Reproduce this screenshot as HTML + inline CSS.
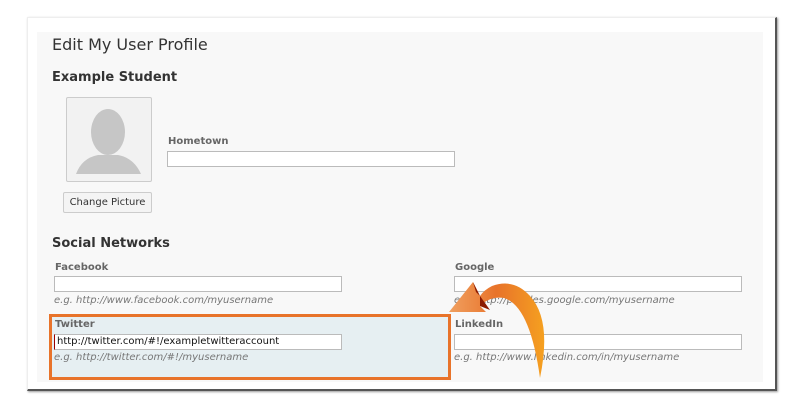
<!DOCTYPE html>
<html><head><style>
*{margin:0;padding:0;box-sizing:border-box}
body{width:800px;height:414px;background:#fff;position:relative;overflow:hidden;font-family:"DejaVu Sans","Liberation Sans",sans-serif}
.a{position:absolute}
.outer{left:27px;top:17px;width:750px;height:374px;background:#fff;border:1px solid #eee;border-right:2px solid #555;border-bottom:2px solid #555;box-shadow:1px 1px 2px #999}
.panel{left:37px;top:32px;width:726px;height:350px;background:#f8f8f8}
.lbl{font-size:10px;font-weight:bold;color:#666}
.inp{height:16px;background:#fff;border:1px solid #bbb}
.hint{font-size:10px;font-style:italic;color:#777}
</style></head><body>
<div class="a outer"></div>
<div class="a panel"></div>
<div class="a" style="left:52px;top:35px;font-size:16px;color:#333">Edit My User Profile</div>
<div class="a" style="left:52px;top:70px;font-size:13px;font-weight:bold;color:#333">Example Student</div>
<div class="a" style="left:66px;top:97px;width:86px;height:85px;background:#f2f2f2;border:1px solid #ccc;border-radius:2px"></div>
<svg class="a" style="left:66px;top:97px" width="86" height="85"><ellipse cx="42" cy="35" rx="17" ry="23" fill="#c6c6c6"/><path d="M10 77 Q16 61 32 58 L52 58 Q68 61 75 77 Z" fill="#c6c6c6"/></svg>
<div class="a" style="left:63px;top:192px;width:89px;height:21px;background:#f4f4f4;border:1px solid #ccc;border-radius:2px;font-size:10px;color:#333;text-align:center;line-height:20px">Change Picture</div>
<div class="a lbl" style="left:168px;top:136px">Hometown</div>
<div class="a inp" style="left:167px;top:151px;width:288px"></div>
<div class="a" style="left:52px;top:236px;font-size:13px;font-weight:bold;color:#333">Social Networks</div>
<div class="a lbl" style="left:55px;top:262px">Facebook</div>
<div class="a inp" style="left:54px;top:276px;width:288px"></div>
<div class="a hint" style="left:54px;top:295px">e.g. http://www.facebook.com/myusername</div>
<div class="a" style="left:49px;top:314px;width:402px;height:66px;background:#e6eff2;border:3px solid #e8732a"></div>
<div class="a lbl" style="left:55px;top:319px">Twitter</div>
<div class="a inp" style="left:54px;top:334px;width:288px;font-size:10px;color:#111;line-height:14px;padding-left:2px;border-left:1px solid #900">http://twitter.com/#!/exampletwitteraccount</div>
<div class="a hint" style="left:54px;top:352px">e.g. http://twitter.com/#!/myusername</div>
<div class="a lbl" style="left:455px;top:262px">Google</div>
<div class="a inp" style="left:454px;top:276px;width:288px"></div>
<div class="a hint" style="left:454px;top:295px">e.g. http://profiles.google.com/myusername</div>
<div class="a lbl" style="left:455px;top:319px">LinkedIn</div>
<div class="a inp" style="left:454px;top:334px;width:288px"></div>
<div class="a hint" style="left:454px;top:352px">e.g. http://www.linkedin.com/in/myusername</div>
<svg class="a" style="left:440px;top:270px" width="120" height="110">
<defs><linearGradient id="g" x1="0" y1="0" x2="1" y2="0"><stop offset="0" stop-color="#f0a060"/><stop offset=".5" stop-color="#e8732a"/><stop offset="1" stop-color="#f5a020"/></linearGradient></defs>
<path d="M100 108 Q112 50 90 26 Q74 8 52 16 Q44 20 40 26 L33 12 L9 42 L46 42 L40 36 Q50 26 64 28 Q90 36 100 108 Z" fill="url(#g)"/>
<path d="M40 26 L50 40 L40 36 Z" fill="#8b1a00"/>
<path d="M33 12 L40 26 L36 22 Z" fill="#8b1a00"/>
</svg>
</body></html>
